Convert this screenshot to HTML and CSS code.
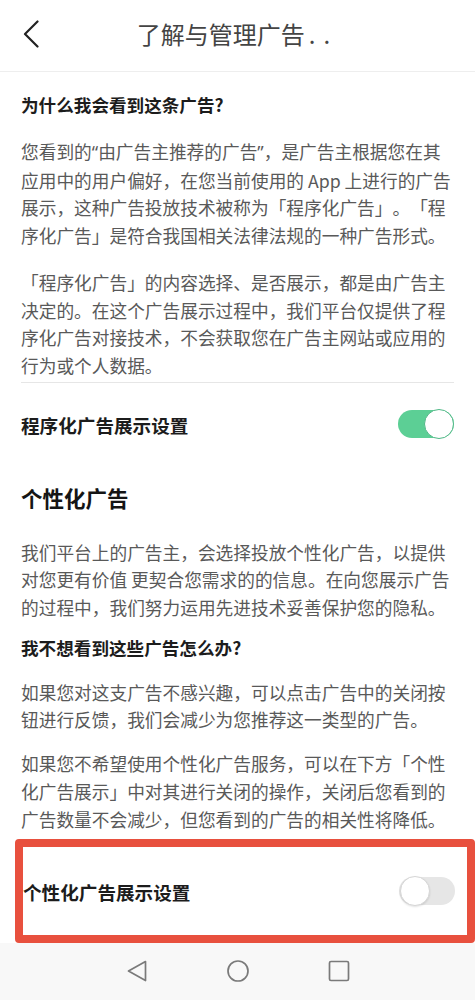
FILE: index.html
```html
<!DOCTYPE html>
<html lang="zh-CN">
<head>
<meta charset="utf-8">
<title>了解与管理广告</title>
<link rel="stylesheet" href="styles.css">
</head>
<body>
<div class="page">
  <header class="topbar">
    <div class="back">
      <svg width="18" height="28" viewBox="0 0 18 28"><path d="M15.5 1.5 L3 14 L15.5 26.5" fill="none" stroke="#222" stroke-width="2.2" stroke-linecap="round" stroke-linejoin="round"/></svg>
    </div>
    <div class="title">了解与管理广告<span class="dots">..</span></div>
    <div></div>
  </header>

  <main class="content">
    <h2 class="q first">为什么我会看到这条广告?</h2>
    <p class="txt p1">您看到的<span class="mark">“</span>由广告主推荐的广告<span class="mark">”</span>，是广告主根据您在其应用中的用户偏好，在您当前使用的 App 上进行的广告展示，这种广告投放技术被称为「程序化广告」。「程序化广告」是符合我国相关法律法规的一种广告形式。</p>
    <p class="txt p2">「程序化广告」的内容选择、是否展示，都是由广告主决定的。在这个广告展示过程中，我们平台仅提供了程序化广告对接技术，不会获取您在广告主网站或应用的行为或个人数据。</p>
    <div class="divider"></div>
    <div class="setting">
      <span class="setting-label">程序化广告展示设置</span>
      <span class="switch on"></span>
    </div>
    <h1 class="section">个性化广告</h1>
    <p class="txt p3">我们平台上的广告主，会选择投放个性化广告，以提供对您更有价值 更契合您需求的的信息。在向您展示广告的过程中，我们努力运用先进技术妥善保护您的隐私。</p>
    <h2 class="q second">我不想看到这些广告怎么办?</h2>
    <p class="txt p4">如果您对这支广告不感兴趣，可以点击广告中的关闭按钮进行反馈，我们会减少为您推荐这一类型的广告。</p>
    <p class="txt p5">如果您不希望使用个性化广告服务，可以在下方「个性化广告展示」中对其进行关闭的操作，关闭后您看到的广告数量不会减少，但您看到的广告的相关性将降低。</p>
    <div class="setting marked">
      <span class="setting-label">个性化广告展示设置</span>
      <span class="switch off"></span>
    </div>
  </main>

  <nav class="navbar">
    <svg width="22" height="22" viewBox="0 0 22 22"><path d="M19.5 1.5 L2.5 11 L19.5 20.5 Z" fill="none" stroke="#7a7a7a" stroke-width="1.7" stroke-linejoin="round"/></svg>
    <svg width="22" height="22" viewBox="0 0 22 22"><circle cx="11" cy="11" r="10" fill="none" stroke="#7a7a7a" stroke-width="1.7"/></svg>
    <svg width="22" height="22" viewBox="0 0 22 22"><rect x="1.5" y="1.5" width="19" height="19" rx="1.5" fill="none" stroke="#7a7a7a" stroke-width="1.7"/></svg>
  </nav>
</div>
</body>
</html>
```

FILE: styles.css
```css
* { box-sizing: border-box; }
html, body { margin: 0; padding: 0; background: #fff; }
body {
  font-family: "Noto Sans CJK SC", "Noto Sans", sans-serif;
  color: #222;
  text-spacing-trim: space-all;
}
.page {
  width: 475px;
  height: 1000px;
  display: flex;
  flex-direction: column;
  overflow: hidden;
}
.topbar {
  height: 72px;
  flex: none;
  display: grid;
  grid-template-columns: 1fr auto 1fr;
  align-items: center;
  border-bottom: 1px solid #eeeeee;
  padding-left: 22px;
  padding-bottom: 4px;
}
.back { display: flex; align-items: center; }
.back svg { display: block; }
.title {
  font-size: 24px;
  color: #444;
  font-weight: 400;
  line-height: 30px;
  margin-left: -22px;
}
.dots { letter-spacing: 8px; margin-left: 4px; }
.content {
  flex: 1;
  padding: 0 21px;
  display: flex;
  flex-direction: column;
}
.q {
  margin: 0;
  font-size: 17.6px;
  font-weight: 700;
  line-height: 24px;
  color: #1c1c1c;
}
.q.first { margin-top: 21px; }
.q.second { margin-top: 14px; }
.txt {
  margin: 0;
  font-size: 17.7px;
  line-height: 27.7px;
  color: #595959;
}
.mark { font-family: "Noto Sans", sans-serif; }
.p1 { margin-top: 21px; }
.p2 { margin-top: 19px; }
.p3 { margin-top: 26px; }
.p4 { margin-top: 19px; }
.p5 { margin-top: 16px; }
.divider {
  margin-top: 2px;
  height: 1px;
  background: #e6e6e6;
}
.setting {
  height: 83px;
  display: flex;
  align-items: center;
  justify-content: space-between;
}
.setting-label {
  font-size: 18.6px;
  font-weight: 700;
  color: #1c1c1c;
}
.section {
  margin: 17px 0 0;
  font-size: 21.5px;
  font-weight: 700;
  line-height: 30px;
  color: #151515;
}
.switch {
  position: relative;
  width: 56px;
  height: 28px;
  border-radius: 14px;
  flex: none;
}
.switch::after {
  content: "";
  position: absolute;
  top: -1px;
  width: 30px;
  height: 30px;
  border-radius: 50%;
  background: #fff;
  box-sizing: border-box;
}
.switch.on { background: #5ccf95; }
.switch.on::after { right: 0; border: 1.5px solid #4fb886; }
.switch.off { background: #e6e6e6; }
.switch.off::after {
  left: 1px;
  border: 1px solid #d6d6d6;
  box-shadow: 0 1px 2px rgba(0,0,0,0.12);
}
.setting.marked {
  margin: 6px -21px 0 -6px;
  height: 104px;
  border: 8px solid #e8503e;
  border-radius: 4px;
  padding: 0 12px 0 0;
}
.navbar {
  height: 58px;
  flex: none;
  background: #f8f8f8;
  display: flex;
  align-items: center;
  justify-content: center;
  gap: 79px;
  padding-bottom: 2px;
}
.navbar svg { display: block; }
```
